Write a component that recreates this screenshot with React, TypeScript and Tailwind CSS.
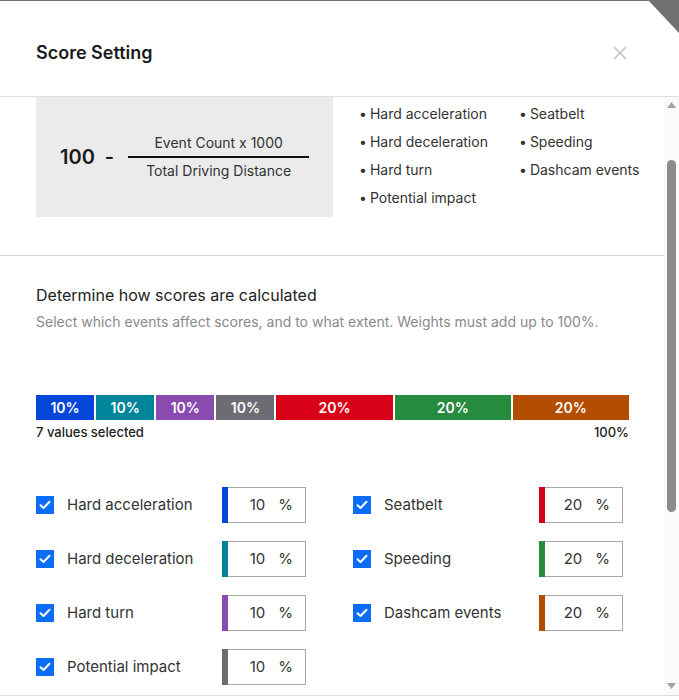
import React from "react";

type Weight = { name: string; value: number; color: string };

const left: Weight[] = [
  { name: "Hard acceleration", value: 10, color: "bg-[#0546d8]" },
  { name: "Hard deceleration", value: 10, color: "bg-[#00849a]" },
  { name: "Hard turn", value: 10, color: "bg-[#8a4baf]" },
  { name: "Potential impact", value: 10, color: "bg-[#6d6c72]" },
];

const right: Weight[] = [
  { name: "Seatbelt", value: 20, color: "bg-[#d80018]" },
  { name: "Speeding", value: 20, color: "bg-[#258b3f]" },
  { name: "Dashcam events", value: 20, color: "bg-[#b34e00]" },
];

function Check() {
  return (
    <span className="w-[18px] h-[18px] bg-[#0b6cf5] flex items-center justify-center shrink-0">
      <svg width={12} height={10} viewBox="0 0 12 10" fill="none">
        <path d="M1.5 5.2 4.5 8 10.5 1.8" stroke="white" strokeWidth={2} strokeLinecap="round" strokeLinejoin="round" />
      </svg>
    </span>
  );
}

function WeightRow({ item }: { item: Weight }) {
  return (
    <div className="flex items-center h-[36px]">
      <Check />
      <span className="ml-[13px] w-[155px] text-[15px] text-[#333]">{item.name}</span>
      <span className={`w-[6px] h-[36px] ${item.color}`}></span>
      <div className="w-[78px] h-[36px] border border-l-0 border-[#a8a8a8] flex items-center justify-end pr-[12px] text-[15px] text-[#333]">
        <span>{item.value}</span>
        <span className="ml-[13px]">%</span>
      </div>
    </div>
  );
}

export default function App() {
  const all = [...left, ...right];
  return (
    <div className="relative w-[679px] h-[700px] bg-white font-[Inter,sans-serif] overflow-hidden">
      <div className="h-px bg-[#707070]"></div>
      {/* backdrop corner peeking out */}
      <svg className="absolute top-0 right-0" width={31} height={33} viewBox="0 0 31 33">
        <polygon points="0,0 31,0 31,33" fill="#707070" />
      </svg>

      <div className="h-[96px] flex items-center justify-between pt-[8px] pl-[36px] pr-[52px] border-b border-[#dedede]">
        <h1 className="text-[18px] font-semibold text-[#1a1a1a]">Score Setting</h1>
        <svg width={14} height={14} viewBox="0 0 14 14" stroke="#c4c4c4" strokeWidth={1.6}>
          <path d="M1 1 13 13M13 1 1 13" />
        </svg>
      </div>

      <div className="flex h-[599px] border-b border-[#dedede]">
        <div className="flex-1 overflow-hidden">
          <div className="flex items-start pl-[36px] pb-[38px] border-b border-[#d6d6d6]">
            <div className="w-[297px] h-[120px] bg-[#ebebeb] flex items-center pl-[24px]">
              <span className="text-[20px] font-semibold text-[#1a1a1a]">100</span>
              <span className="text-[20px] font-semibold text-[#1a1a1a] ml-[10px]">-</span>
              <div className="ml-[14px] w-[181px] flex flex-col items-center text-[14px] text-[#333]">
                <span className="leading-[20px]">Event Count x 1000</span>
                <span className="w-full h-[2px] bg-[#111] my-[3px]"></span>
                <span className="leading-[20px]">Total Driving Distance</span>
              </div>
            </div>
            <div className="ml-[26px] pt-[3px] grid grid-cols-[160px_auto] grid-flow-col grid-rows-[repeat(4,28px)] text-[14px] text-[#333] leading-[28px]">
              {["Hard acceleration", "Hard deceleration", "Hard turn", "Potential impact", "Seatbelt", "Speeding", "Dashcam events"].map((t) => (
                <span key={t}>
                  <span className="mr-[3px]">•</span>
                  {t}
                </span>
              ))}
            </div>
          </div>

          <div className="pl-[36px] pr-[35px] pt-[29px]">
            <p className="text-[16px] leading-[20px] text-[#222]">Determine how scores are calculated</p>
            <p className="mt-[8px] text-[14px] leading-[18px] text-[#8a8a8a]">
              Select which events affect scores, and to what extent. Weights must add up to 100%.
            </p>

            <div className="mt-[64px] flex gap-[2px] h-[25px]">
              {all.map((w) => (
                <div
                  key={w.name}
                  className={`${w.color} ${w.value === 20 ? "flex-[2]" : "flex-1"} flex items-center justify-center text-white text-[14px] font-semibold`}
                >
                  {w.value}%
                </div>
              ))}
            </div>
            <div className="flex justify-between mt-[3px] text-[13px] leading-[18px] font-medium text-[#222]">
              <span>7 values selected</span>
              <span>100%</span>
            </div>

            <div className="mt-[46px] grid grid-cols-[317px_auto]">
              <div className="flex flex-col gap-[18px]">
                {left.map((w) => (
                  <WeightRow key={w.name} item={w} />
                ))}
              </div>
              <div className="flex flex-col gap-[18px]">
                {right.map((w) => (
                  <WeightRow key={w.name} item={w} />
                ))}
              </div>
            </div>
          </div>
        </div>

        {/* scrollbar */}
        <div className="w-[15px] bg-[#fafafa] flex flex-col items-center">
          <svg className="mt-[5px]" width={9} height={6} viewBox="0 0 9 6">
            <polygon points="4.5,0 9,6 0,6" fill="#a3a3a3" />
          </svg>
          <div className="mt-[52px] w-[9px] h-[352px] rounded-full bg-[#8c8c8c]"></div>
          <div className="flex-1"></div>
          <svg className="mb-[6px]" width={9} height={6} viewBox="0 0 9 6">
            <polygon points="0,0 9,0 4.5,6" fill="#a3a3a3" />
          </svg>
        </div>
      </div>
    </div>
  );
}
